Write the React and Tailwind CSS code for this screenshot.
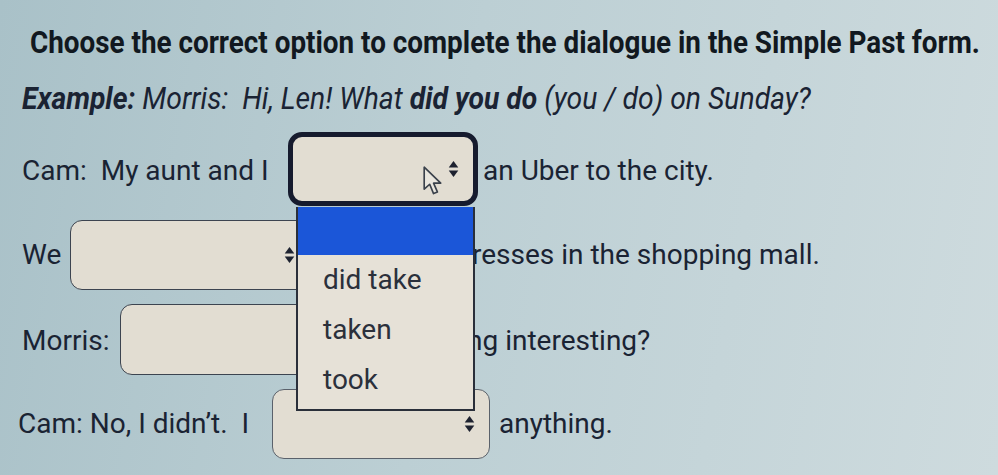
import React from 'react';

const Arrows = ({ className = '' }) => (
  <svg viewBox="0 0 10 16" className={className} aria-hidden="true">
    <path d="M5 0.5 L9.5 6.5 L0.5 6.5 Z" fill="#1d2230" />
    <path d="M5 15.5 L9.5 9.5 L0.5 9.5 Z" fill="#1d2230" />
  </svg>
);

const Cursor = () => (
  <svg viewBox="0 0 20 30" className="absolute left-[129px] top-[28px] w-[22px] h-[33px]" aria-hidden="true">
    <path
      d="M2 2 L2 22 L7 17.5 L10.5 26 L14 24.5 L10.5 16.5 L17 16.5 Z"
      fill="#e9e6de"
      stroke="#3a414b"
      strokeWidth="1.5"
      strokeLinejoin="round"
    />
  </svg>
);

const Select = ({ className = '', arrow = true, children }) => (
  <div className={`relative shrink-0 bg-[#e2ddd2] rounded-[12px] ${className}`}>
    {arrow && <Arrows className="absolute right-[14px] top-1/2 -translate-y-1/2 w-[11px] h-[17px]" />}
    {children}
  </div>
);

const options = ['did take', 'taken', 'took'];

const App = () => {
  return (
    <div
      className="relative w-[998px] h-[475px] overflow-hidden bg-[linear-gradient(100deg,#a9c1c8_0%,#bccfd4_45%,#cedbde_100%)] text-[#1a2333]"
      style={{ fontFamily: 'Roboto, "Liberation Sans", sans-serif' }}
    >
      <div className="pt-[25px] pl-[30px]">
        <div className="origin-left scale-x-[0.87] whitespace-nowrap text-[32px] leading-[34px] font-bold text-[#111820]">
          Choose the correct option to complete the dialogue in the Simple Past form.
        </div>
      </div>

      <div className="pl-[22px] mt-[22px]">
        <div className="origin-left scale-x-[0.885] whitespace-nowrap italic text-[32px] leading-[34px]">
          <span className="font-bold">Example:</span> Morris:&nbsp; Hi, Len! What{' '}
          <span className="font-bold">did you do</span> (you / do) on Sunday?
        </div>
      </div>

      <div className="flex flex-col gap-[14px] mt-[17px] text-[28px]">
        <div className="flex items-center pl-[22px]">
          <span className="whitespace-pre w-[266px] pt-[4px]">Cam:  My aunt and I</span>
          <Select className="w-[190px] h-[74px] border-[5px] border-[#161b2e] rounded-[14px]">
            <Cursor />
          </Select>
          <span className="ml-[5px] pt-[4px] whitespace-nowrap">an Uber to the city.</span>
        </div>

        <div className="flex items-center pl-[22px]">
          <span className="w-[48px]">We</span>
          <Select className="w-[240px] h-[70px] border-[1.5px] border-[#3c4450]" />
          <span className="ml-[162px] whitespace-nowrap">resses in the shopping mall.</span>
        </div>

        <div className="flex items-center pl-[22px]">
          <span className="w-[98px] pt-[3px]">Morris:</span>
          <Select className="w-[270px] h-[71px] border-[1.5px] border-[#3c4450]" arrow={false} />
          <span className="ml-[77px] pt-[3px] whitespace-nowrap">ng interesting?</span>
        </div>

        <div className="flex items-center pl-[18px]">
          <span className="whitespace-pre w-[254px]">Cam: No, I didn’t.  I</span>
          <Select className="w-[218px] h-[70px] border-[1.5px] border-[#5a616b]" />
          <span className="ml-[9px] whitespace-nowrap">anything.</span>
        </div>
      </div>

      <div className="absolute left-[296px] top-[207px] w-[179px] bg-[#e6e1d7] border-x-2 border-b-2 border-[#2a2f3a] pb-[4px] text-[28px] text-[#2b303b]">
        <div className="h-[48px] bg-[#1b56d8]" />
        {options.map((o) => (
          <div key={o} className="h-[50px] flex items-center pl-[25px]">
            {o}
          </div>
        ))}
      </div>
    </div>
  );
};

export default App;
